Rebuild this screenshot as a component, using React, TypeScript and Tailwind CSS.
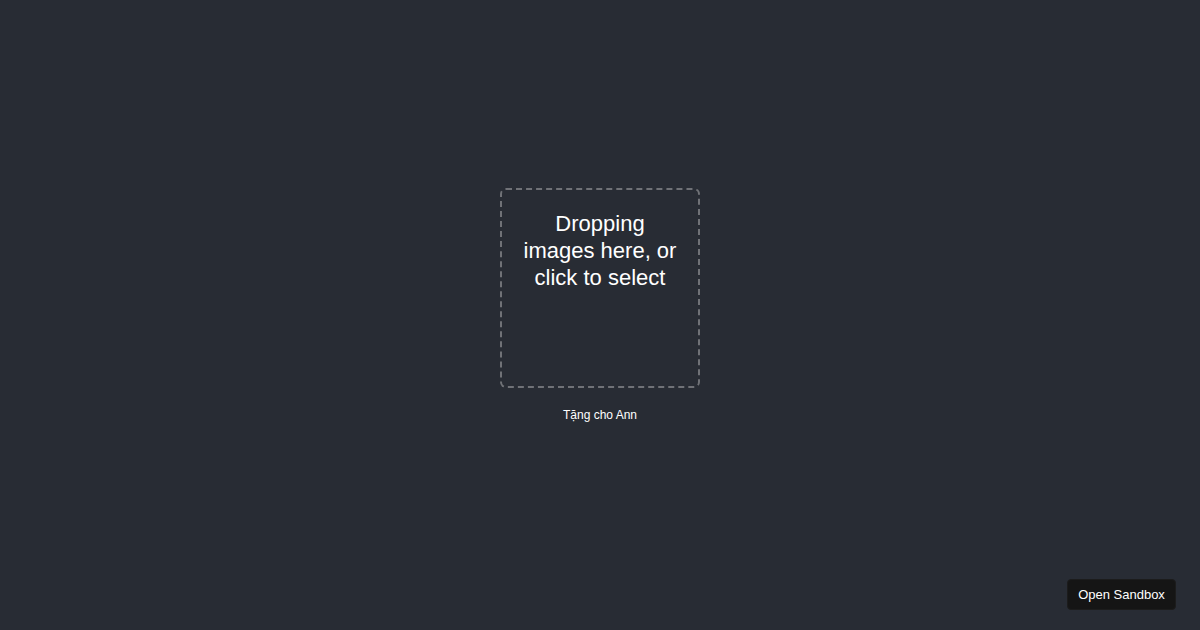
import React from "react";

export default function App() {
  return (
    <div
      className="w-[1200px] h-[630px] bg-[#282c34] relative overflow-hidden text-white"
      style={{ fontFamily: '"Liberation Sans", Arial, sans-serif' }}
    >
      <div className="flex flex-col items-center pt-[188px]">
        <div className="w-[200px] h-[200px] border-2 border-dashed border-[#707277] rounded-[6px] px-[20px] pt-[20px] text-center text-[22px] leading-[27px] text-white cursor-pointer">
          Dropping images here, or click to select
        </div>
        <div className="mt-[19px] text-[12px] leading-[16px] text-white">Tặng cho Ann</div>
      </div>
      <button className="absolute right-[24px] bottom-[20px] w-[109px] h-[31px] bg-[#151515] rounded-[4px] text-[13px] text-white flex items-center justify-center border border-[#1c1c1c]">
        Open Sandbox
      </button>
    </div>
  );
}
